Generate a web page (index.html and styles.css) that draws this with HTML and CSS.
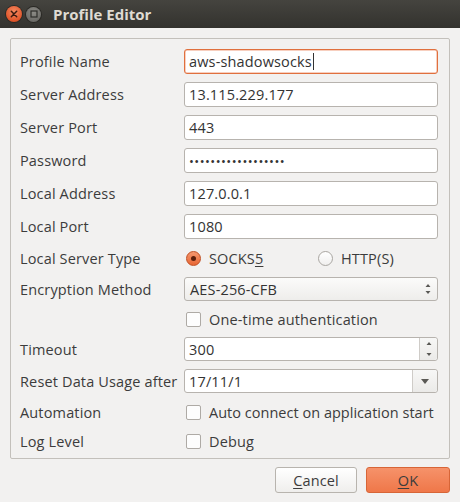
FILE: index.html
```html
<!DOCTYPE html>
<html>
<head>
<meta charset="utf-8">
<link rel="stylesheet" href="styles.css">
</head>
<body>
<div class="window">
  <div class="titlebar">
    <div class="wbtn close"><svg width="16" height="16" viewBox="0 0 16 16"><path d="M5.3 5.3 L10.7 10.7 M10.7 5.3 L5.3 10.7" stroke="#3a1a10" stroke-width="1.5" stroke-linecap="round"/></svg></div>
    <div class="wbtn max"><svg width="14" height="14" viewBox="0 0 14 14"><rect x="4" y="4" width="6" height="6" fill="none" stroke="#2e2d2a" stroke-width="1.2"/></svg></div>
    <div class="title">Profile Editor</div>
  </div>
  <div class="content">
    <div class="group">
      <div class="label">Profile Name</div>
      <div class="field focus"><span>aws-shadowsocks</span><span class="caret"></span></div>

      <div class="label">Server Address</div>
      <div class="field">13.115.229.177</div>

      <div class="label">Server Port</div>
      <div class="field">443</div>

      <div class="label">Password</div>
      <div class="field"><span class="dots">••••••••••••••••••</span></div>

      <div class="label">Local Address</div>
      <div class="field">127.0.0.1</div>

      <div class="label">Local Port</div>
      <div class="field">1080</div>

      <div class="label">Local Server Type</div>
      <div class="radios">
        <div class="opt socks"><span class="radio on"><span class="dot"></span></span><span>SOCKS<u>5</u></span></div>
        <div class="opt"><span class="radio"></span><span>HTTP(S)</span></div>
      </div>

      <div class="label">Encryption Method</div>
      <div class="field combo"><span class="val">AES-256-CFB</span>
        <svg class="updown" width="8" height="14" viewBox="0 0 8 14"><path d="M4 2 L6.5 5 L1.5 5 Z M4 12 L6.5 9 L1.5 9 Z" fill="#5a5955"/></svg>
      </div>

      <div class="label"></div>
      <div class="check"><span class="box"></span><span>One-time authentication</span></div>

      <div class="label">Timeout</div>
      <div class="field spin"><span class="val">300</span>
        <div class="spinbtn"><svg width="8" height="22" viewBox="0 0 8 22"><path d="M4 4 L6.5 7 L1.5 7 Z M4 18 L6.5 15 L1.5 15 Z" fill="#5a5955"/></svg></div>
      </div>

      <div class="label">Reset Data Usage after</div>
      <div class="field date"><span class="val">17/11/1</span>
        <div class="dropbtn"><svg width="10" height="8" viewBox="0 0 10 8"><path d="M1 2 L9 2 L5 7 Z" fill="#5a5955"/></svg></div>
      </div>

      <div class="label">Automation</div>
      <div class="check"><span class="box"></span><span class="tight">Auto connect on application start</span></div>

      <div class="label">Log Level</div>
      <div class="check"><span class="box"></span><span>Debug</span></div>
    </div>
    <div class="buttons">
      <div class="btn cancel"><u>C</u>ancel</div>
      <div class="btn ok"><u>O</u>K</div>
    </div>
  </div>
</div>
</body>
</html>
```

FILE: styles.css
```css
html, body {
  margin: 0;
  padding: 0;
  background: #f2f1f0;
}
body {
  font-family: "Open Sans", "Noto Sans", sans-serif;
  font-size: 14.5px;
  letter-spacing: 0.15px;
  color: #3c3c3c;
  width: 460px;
  height: 502px;
  overflow: hidden;
}
.titlebar {
  height: 28px;
  background: linear-gradient(#45443f, #33322e);
  display: flex;
  align-items: center;
  padding-left: 6px;
  box-sizing: border-box;
}
.wbtn {
  width: 16px;
  height: 16px;
  border-radius: 50%;
  display: flex;
  align-items: center;
  justify-content: center;
}
.wbtn.close {
  background: radial-gradient(circle at 50% 35%, #f58a62, #e0552a 70%, #b8421d);
  box-shadow: 0 0 0 1px #2a2925;
}
.wbtn.max {
  margin-left: 4px;
  width: 15px;
  height: 15px;
  background: radial-gradient(circle at 50% 35%, #8c8b86, #6b6a66 75%);
  box-shadow: 0 0 0 1px #2a2925;
}
.title {
  margin-left: 12px;
  font-weight: bold;
  font-size: 15px;
  letter-spacing: 0;
  color: #dfdbd2;
}
.content {
  padding: 10px 10px 0 10px;
}
.group {
  border: 1px solid #c3c0bb;
  border-radius: 2px;
  padding: 10px 10px 8px 9px;
  display: grid;
  grid-template-columns: 164px 254px;
  grid-template-rows: 25px 25px 25px 25px 25px 25px 22px 24px 20px 24px 24px 22px 20px;
  row-gap: 8px;
  height: 421px;
  box-sizing: border-box;
}
.label {
  display: flex;
  align-items: center;
  white-space: nowrap;
  color: #3c3c3c;
}
.field {
  background: #ffffff;
  border: 1px solid #b7b3ae;
  border-radius: 3px;
  display: flex;
  align-items: center;
  padding-left: 4px;
  box-sizing: border-box;
  color: #333;
  position: relative;
  white-space: nowrap;
}
.field.focus {
  border-color: #e0703e;
  box-shadow: inset 0 0 0 0.5px #f0a080;
}
.caret {
  display: inline-block;
  width: 1px;
  height: 17px;
  background: #333;
  margin-left: 1px;
}
.dots {
  font-size: 13px;
  letter-spacing: 0.45px;
  color: #333;
  padding-left: 0;
}
.radios {
  display: flex;
  align-items: center;
}
.opt {
  display: flex;
  align-items: center;
  gap: 8px;
}
.opt.socks {
  width: 132px;
  padding-left: 2px;
}
.radio {
  width: 13px;
  height: 13px;
  border-radius: 50%;
  border: 1px solid #a9a6a1;
  background: linear-gradient(#ffffff, #f0efee);
  display: inline-flex;
  align-items: center;
  justify-content: center;
}
.radio.on {
  border-color: #c04e22;
  background: linear-gradient(#f49870, #e86633);
}
.radio .dot {
  width: 5px;
  height: 5px;
  border-radius: 50%;
  background: #5a1f0c;
}
.combo {
  background: linear-gradient(#fbfbfa, #eeedeb);
  justify-content: space-between;
  padding-right: 5px;
}
.combo .val {
  padding-left: 1px;
}
.check {
  display: flex;
  align-items: center;
  gap: 8px;
  padding-left: 2px;
  white-space: nowrap;
}
.tight {
  letter-spacing: 0.02px;
}
.box {
  width: 13px;
  height: 13px;
  border: 1px solid #aeaaa5;
  border-radius: 2px;
  background: #fdfdfd;
}
.spin, .date {
  padding-right: 0;
}
.spin .val, .date .val {
  flex: 1;
}
.spinbtn {
  width: 17px;
  height: 100%;
  border-left: 1px solid #cfccc8;
  background: linear-gradient(#f7f7f6, #ebeae8);
  display: flex;
  align-items: center;
  justify-content: center;
  border-radius: 0 3px 3px 0;
}
.dropbtn {
  width: 24px;
  height: 100%;
  border-left: 1px solid #cfccc8;
  background: linear-gradient(#f7f7f6, #ebeae8);
  display: flex;
  align-items: center;
  justify-content: center;
  border-radius: 0 3px 3px 0;
}
.buttons {
  display: flex;
  justify-content: flex-end;
  gap: 9px;
  margin-top: 8px;
}
.btn {
  height: 26px;
  border-radius: 3px;
  box-sizing: border-box;
  display: flex;
  align-items: center;
  justify-content: center;
  font-size: 14.5px;
}
.btn.cancel {
  width: 82px;
  border: 1px solid #b8b4ae;
  background: linear-gradient(#ffffff, #efeeec);
  color: #3c3c3c;
}
.btn.ok {
  width: 84px;
  border: 1px solid #d76537;
  background: linear-gradient(#f6926a, #ef7749);
  color: #3c3c3c;
}
u {
  text-underline-offset: 2px;
}
```
